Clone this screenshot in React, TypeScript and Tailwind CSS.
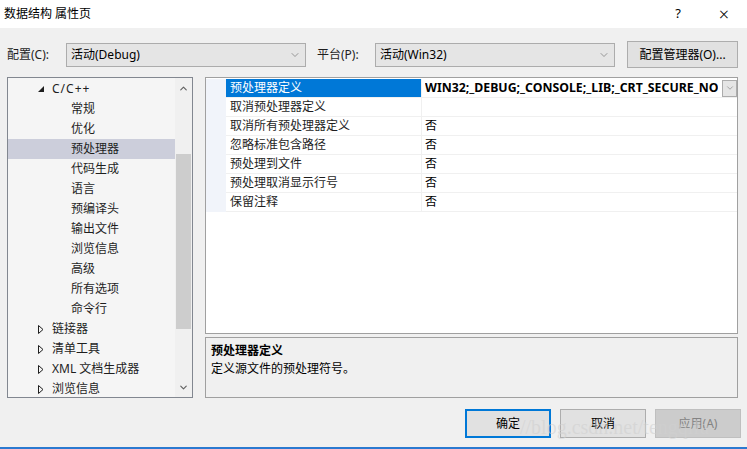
import { ChevronDown, ChevronUp } from 'lucide-react'

const font = { fontFamily: '"Noto Sans", "Noto Sans CJK SC", sans-serif' }

type TreeItem = { label: string; level: 0 | 1; state?: 'open' | 'closed'; selected?: boolean }

const treeItems: TreeItem[] = [
  { label: 'C/C++', level: 0, state: 'open' },
  { label: '常规', level: 1 },
  { label: '优化', level: 1 },
  { label: '预处理器', level: 1, selected: true },
  { label: '代码生成', level: 1 },
  { label: '语言', level: 1 },
  { label: '预编译头', level: 1 },
  { label: '输出文件', level: 1 },
  { label: '浏览信息', level: 1 },
  { label: '高级', level: 1 },
  { label: '所有选项', level: 1 },
  { label: '命令行', level: 1 },
  { label: '链接器', level: 0, state: 'closed' },
  { label: '清单工具', level: 0, state: 'closed' },
  { label: 'XML 文档生成器', level: 0, state: 'closed' },
  { label: '浏览信息', level: 0, state: 'closed' },
]

const props = [
  { name: '预处理器定义', value: 'WIN32;_DEBUG;_CONSOLE;_LIB;_CRT_SECURE_NO', selected: true },
  { name: '取消预处理器定义', value: '' },
  { name: '取消所有预处理器定义', value: '否' },
  { name: '忽略标准包含路径', value: '否' },
  { name: '预处理到文件', value: '否' },
  { name: '预处理取消显示行号', value: '否' },
  { name: '保留注释', value: '否' },
]

function Combo({ value, width }: { value: string; width: string }) {
  return (
    <div className={`${width} h-[24px] flex items-center justify-between bg-[#e5e5e5] border border-[#acacac] pl-[4px] pr-[4px]`}>
      <span className="text-[12px] text-black">{value}</span>
      <ChevronDown size={12} strokeWidth={1.2} className="text-[#606060]" />
    </div>
  )
}

function Arrow({ state }: { state?: 'open' | 'closed' }) {
  if (state === 'open') {
    return (
      <svg width="6" height="6" viewBox="0 0 6 6" className="mr-[8px]">
        <path d="M6 0 L6 6 L0 6 Z" fill="#1e1e1e" />
      </svg>
    )
  }
  return (
    <svg width="6" height="9" viewBox="0 0 6 9" className="mr-[8px]">
      <path d="M0.5 0.5 L5 4.5 L0.5 8.5 Z" fill="none" stroke="#1e1e1e" strokeWidth="1" />
    </svg>
  )
}

function Tree() {
  return (
    <div className="w-[186px] h-[321px] border border-[#828790] bg-[#f5f5f5] flex">
      <div className="flex-1 pt-[1px] overflow-hidden">
        {treeItems.map((it, i) => (
          <div
            key={i}
            className={`h-[20px] flex items-center text-[12px] text-[#1e1e1e] ${it.selected ? 'bg-[#cccedb]' : ''} ${
              it.level === 0 ? 'pl-[30px]' : 'pl-[63px]'
            }`}
          >
            {it.level === 0 && <Arrow state={it.state} />}
            <span className={it.label === 'C/C++' ? 'tracking-[1px]' : ''}>{it.label}</span>
          </div>
        ))}
      </div>
      <div className="w-[17px] bg-[#f0f0f0] flex flex-col items-center">
        <div className="h-[20px] flex items-center">
          <ChevronUp size={11} strokeWidth={2.5} className="text-[#606060]" />
        </div>
        <div className="w-[15px] h-[56px]" />
        <div className="w-[15px] h-[175px] bg-[#cdcdcd]" />
        <div className="flex-1" />
        <div className="h-[20px] flex items-center">
          <ChevronDown size={11} strokeWidth={2.5} className="text-[#606060]" />
        </div>
      </div>
    </div>
  )
}

function Grid() {
  return (
    <div className="h-[257px] border border-[#a0a0a0] bg-white pt-[1px]">
      {props.map((p, i) => (
        <div key={i} className="h-[19px] flex text-[12px]">
          <div className="w-[20px] bg-[#f1f4fa]" />
          <div
            className={`w-[196px] pl-[4px] flex items-center border-r border-b border-[#f0f0f0] ${
              p.selected ? 'bg-[#0078d7] text-white' : 'text-[#1e1e1e]'
            }`}
          >
            {p.name}
          </div>
          <div
            className={`flex-1 min-w-0 pl-[3px] flex items-center justify-between border-b border-[#f0f0f0] ${
              p.selected ? 'font-bold text-[12.3px]' : ''
            }`}
          >
            <span className="whitespace-nowrap overflow-hidden">{p.value}</span>
            {p.selected && (
              <div className="w-[15px] h-[17px] shrink-0 bg-[#e5e5e5] border border-[#acacac] flex items-center justify-center">
                <ChevronDown size={10} strokeWidth={1.2} className="text-[#606060]" />
              </div>
            )}
          </div>
        </div>
      ))}
    </div>
  )
}

function Button({ label, primary, disabled }: { label: string; primary?: boolean; disabled?: boolean }) {
  return (
    <div
      className={`w-[86px] h-[29px] flex items-center justify-center text-[12px] ${
        primary
          ? 'border-2 border-[#0078d7] bg-[#e1e1e1] text-black'
          : disabled
            ? 'border border-[#bfbfbf] bg-[#cccccc] text-[#838383]'
            : 'border border-[#adadad] bg-[#e1e1e1] text-black'
      }`}
    >
      {label}
    </div>
  )
}

export default function App() {
  return (
    <div style={font} className="relative w-[747px] h-[449px] bg-[#f0f0f0] flex flex-col overflow-hidden">
      {/* title bar */}
      <div className="h-[28px] bg-white flex items-center justify-between">
        <span className="pl-[4px] text-[12px] text-black">数据结构 属性页</span>
        <div className="flex items-center">
          <span className="w-[46px] text-center text-[13px] text-black">?</span>
          <span className="w-[46px] text-center text-[18px] font-light text-black">×</span>
        </div>
      </div>

      {/* configuration / platform */}
      <div className="h-[27px] mt-[13px] flex items-center pl-[7px]">
        <span className="w-[59px] text-[12px] text-[#1e1e1e]">配置(C):</span>
        <Combo value="活动(Debug)" width="w-[240px]" />
        <span className="ml-[11px] w-[58px] text-[12px] text-[#1e1e1e]">平台(P):</span>
        <Combo value="活动(Win32)" width="w-[240px]" />
        <div className="ml-[12px] w-[111px] h-[27px] border border-[#adadad] bg-[#e1e1e1] flex items-center justify-center text-[12px] text-black">
          配置管理器(O)...
        </div>
      </div>

      {/* tree + property grid */}
      <div className="mt-[9px] flex pl-[7px]">
        <Tree />
        <div className="ml-[12px] w-[533px] flex flex-col">
          <Grid />
          <div className="mt-[3px] h-[61px] border border-[#a0a0a0] bg-[#f0f0f0] px-[5px] pt-[4px]">
            <div className="text-[12px] font-bold text-black">预处理器定义</div>
            <div className="text-[12px] text-black">定义源文件的预处理符号。</div>
          </div>
        </div>
      </div>

      {/* dialog buttons */}
      <div className="mt-[11px] flex justify-end gap-[9px] pr-[6px]">
        <Button label="确定" primary />
        <Button label="取消" />
        <Button label="应用(A)" disabled />
      </div>

      <div className="absolute left-[520px] top-[412px] text-[20px] text-[#d0d0d0]/60 pointer-events-none" style={{ fontFamily: '"Liberation Serif", serif' }}>
        //blog.csdn.net/tengqifa
      </div>
      <div className="absolute left-0 right-0 bottom-0 h-[2px] bg-[#2b79d0]" />
    </div>
  )
}
